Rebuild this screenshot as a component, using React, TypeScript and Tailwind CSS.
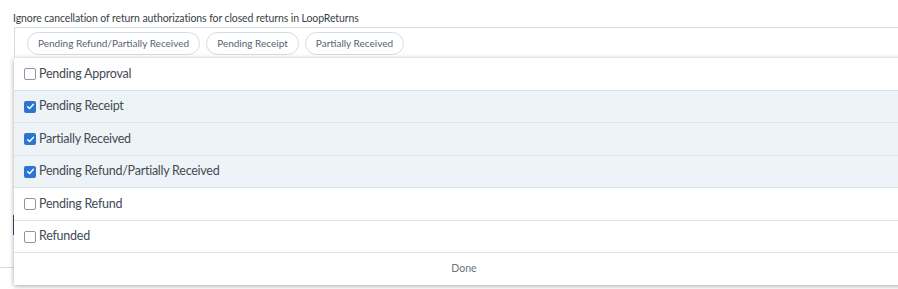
import React from 'react';

const chips = ['Pending Refund/Partially Received', 'Pending Receipt', 'Partially Received'];

const options = [
  { label: 'Pending Approval', checked: false },
  { label: 'Pending Receipt', checked: true },
  { label: 'Partially Received', checked: true },
  { label: 'Pending Refund/Partially Received', checked: true },
  { label: 'Pending Refund', checked: false },
  { label: 'Refunded', checked: false },
];

const Checkbox = ({ checked }: { checked: boolean }) =>
  checked ? (
    <span className="w-[12px] h-[12px] rounded-[2px] bg-[#2b74cf] flex items-center justify-center shrink-0">
      <svg width="9" height="9" viewBox="0 0 10 10">
        <path d="M1.8 5.2 L4 7.3 L8.3 2.6" fill="none" stroke="white" strokeWidth="1.6" strokeLinecap="round" strokeLinejoin="round" />
      </svg>
    </span>
  ) : (
    <span className="w-[12px] h-[12px] rounded-[2px] border border-[#8a96a3] bg-white shrink-0" />
  );

export default function App() {
  return (
    <div className="w-[898px] h-[289px] bg-white relative overflow-hidden font-['Lato','Noto_Sans',sans-serif]">
      {/* Underlying form field */}
      <div className="pt-[11px] pl-[13px] text-[10.5px] leading-[14px] text-[#3a3f45] tracking-[-0.1px]">
        Ignore cancellation of return authorizations for closed returns in LoopReturns
      </div>
      <div className="mt-[2px] ml-[14px] h-[200px] border-t border-l border-[#d5dee6] pt-[4px] pl-[12px] flex gap-[6px] items-start">
        {chips.map((c) => (
          <span
            key={c}
            className="h-[23px] px-[10px] rounded-full border border-[#cfdde6] text-[10px] text-[#59636e] flex items-center whitespace-nowrap"
          >
            {c}
          </span>
        ))}
      </div>
      <div className="ml-[13px] mt-[-12px] w-[2px] h-[20px] bg-[#34506e]" />
      <div className="mt-[32px] w-[14px] h-px bg-[#d5dee6]" />

      {/* Dropdown overlay */}
      <div className="absolute left-[14px] top-[58px] w-[900px] bg-white shadow-[0_1px_5px_rgba(0,0,0,0.35)]">
        {options.map((o) => (
          <div
            key={o.label}
            className={`h-[32.5px] pt-px border-b border-[#d8e4ec] flex items-center gap-[3px] pl-[10px] ${o.checked ? 'bg-[#eef3f8]' : 'bg-white'}`}
          >
            <Checkbox checked={o.checked} />
            <span className="text-[12.5px] text-[#434b54] tracking-[-0.25px]">{o.label}</span>
          </div>
        ))}
        <div className="h-[32px] flex items-center justify-center">
          <span className="text-[10.5px] text-[#6b7480]">Done</span>
        </div>
      </div>
    </div>
  );
}
